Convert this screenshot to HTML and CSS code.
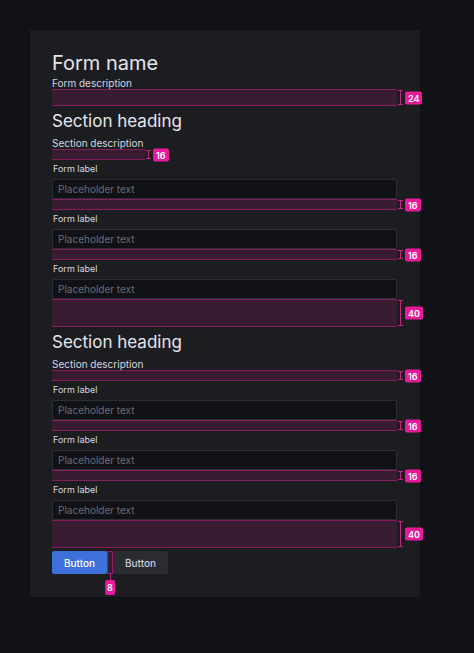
FILE: index.html
```html
<!DOCTYPE html>
<html lang="en">
<head>
  <meta charset="UTF-8" />
  <meta name="viewport" content="width=device-width, initial-scale=1.0" />
  <title>Form layout</title>
  <link rel="stylesheet" href="styles.css">
</head>
<body>
  <div class="panel">
    <h1 class="form-title">Form name</h1>
    <p class="form-desc">Form description</p>
    <div class="spacer sp-24"><span class="bracket"></span><span class="badge">24</span></div>

    <h2 class="section-title">Section heading</h2>
    <p class="section-desc">Section description</p>
    <div class="spacer sp-16 narrow"><span class="bracket"></span><span class="badge">16</span></div>

    <div class="field">
      <label>Form label</label>
      <input type="text" placeholder="Placeholder text" />
    </div>
    <div class="spacer sp-16"><span class="bracket"></span><span class="badge">16</span></div>
    <div class="field">
      <label>Form label</label>
      <input type="text" placeholder="Placeholder text" />
    </div>
    <div class="spacer sp-16"><span class="bracket"></span><span class="badge">16</span></div>
    <div class="field">
      <label>Form label</label>
      <input type="text" placeholder="Placeholder text" />
    </div>
    <div class="spacer sp-40"><span class="bracket"></span><span class="badge">40</span></div>

    <h2 class="section-title">Section heading</h2>
    <p class="section-desc">Section description</p>
    <div class="spacer sp-16"><span class="bracket"></span><span class="badge">16</span></div>

    <div class="field">
      <label>Form label</label>
      <input type="text" placeholder="Placeholder text" />
    </div>
    <div class="spacer sp-16"><span class="bracket"></span><span class="badge">16</span></div>
    <div class="field">
      <label>Form label</label>
      <input type="text" placeholder="Placeholder text" />
    </div>
    <div class="spacer sp-16"><span class="bracket"></span><span class="badge">16</span></div>
    <div class="field">
      <label>Form label</label>
      <input type="text" placeholder="Placeholder text" />
    </div>
    <div class="spacer sp-40"><span class="bracket"></span><span class="badge">40</span></div>

    <div class="actions">
      <button class="btn primary">Button</button>
      <div class="gap"><span class="gap-line"></span><span class="badge small">8</span></div>
      <button class="btn secondary">Button</button>
    </div>
  </div>
</body>
</html>
```

FILE: styles.css
```css
body {
  margin: 0;
  padding: 30px;
  background: #111217;
  color: #ccccdc;
  font-family: Inter, "Noto Sans", sans-serif;
  min-height: 653px;
  box-sizing: border-box;
}
.panel {
  width: 390px;
  box-sizing: border-box;
  background: #1c1d21;
  padding: 20px 23px 23px 22px;
}
.form-title {
  margin: 0;
  font-size: 20px;
  line-height: 26px;
  font-weight: 400;
  color: #e6e6ec;
}
.form-desc, .section-desc {
  margin: 2px 0 0;
  font-size: 10px;
  line-height: 11px;
  color: #d8d8e0;
}
.section-title {
  margin: 3px 0 0;
  font-size: 17px;
  line-height: 24px;
  font-weight: 400;
  color: #e6e6ec;
}
.section-desc {
  margin-top: 4px;
  line-height: 12px;
}

/* spacing annotations */
.spacer {
  position: relative;
  box-sizing: border-box;
  background: rgba(230, 30, 150, 0.14);
  border-top: 1px solid rgba(230, 30, 150, 0.45);
  border-bottom: 1px solid rgba(230, 30, 150, 0.45);
}
.sp-16 { height: 11px; }
.sp-24 { height: 17px; }
.sp-40 { height: 28px; }
.spacer.narrow { width: 93px; }
.bracket {
  position: absolute;
  right: -6px;
  top: 0;
  bottom: 0;
  width: 5px;
  border-top: 1px solid #c0287f;
  border-bottom: 1px solid #c0287f;
  box-sizing: border-box;
}
.bracket::after {
  content: "";
  position: absolute;
  left: 2px;
  top: 0;
  bottom: 0;
  width: 1px;
  background: #c0287f;
}
.badge {
  position: absolute;
  left: calc(100% + 8px);
  top: 50%;
  transform: translateY(-50%);
  background: #e8199b;
  color: #fff;
  font-size: 9px;
  line-height: 13px;
  font-weight: 600;
  padding: 0 3px;
  border-radius: 2px;
}

.field {
  display: flex;
  flex-direction: column;
}
.field label {
  margin: 2px 0 4px 1px;
  font-size: 9px;
  line-height: 13px;
  font-weight: 400;
  color: #d8d8e0;
}
.field input {
  height: 20px;
  box-sizing: border-box;
  background: #111217;
  border: 1px solid #2d2f35;
  border-radius: 2px;
  padding: 0 5px;
  font-family: Inter, "Noto Sans", sans-serif;
  font-size: 10px;
  color: #ccccdc;
}
.field input::placeholder {
  color: #6b6c74;
}

.actions {
  display: flex;
  margin-top: 3px;
}
.btn {
  height: 23px;
  width: 55px;
  border: none;
  border-radius: 2px;
  font-family: Inter, "Noto Sans", sans-serif;
  font-size: 10px;
  font-weight: 500;
  cursor: pointer;
}
.primary {
  background: #3d71d9;
  color: #fff;
}
.secondary {
  background: #2a2c31;
  color: #ccccdc;
}
.gap {
  position: relative;
  width: 6px;
  box-sizing: border-box;
  border: 1px solid rgba(230, 30, 150, 0.55);
  background: rgba(230, 30, 150, 0.12);
}
.gap-line {
  position: absolute;
  left: 2px;
  top: 100%;
  width: 1px;
  height: 7px;
  background: #c0287f;
}
.badge.small {
  left: 50%;
  top: calc(100% + 7px);
  transform: translateX(-50%);
  padding: 1px 2px;
}
```
